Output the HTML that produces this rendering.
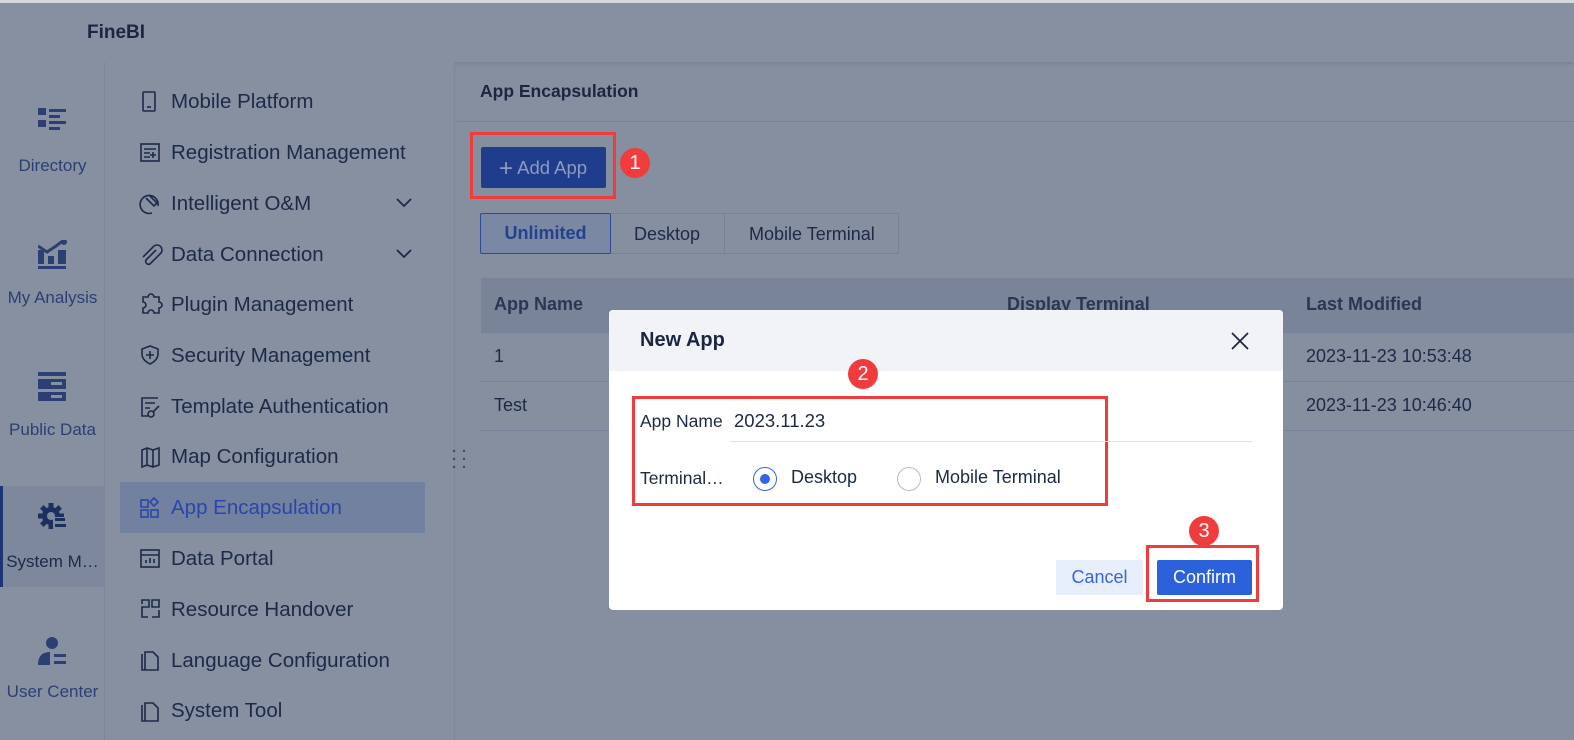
<!DOCTYPE html>
<html><head><meta charset="utf-8"><style>
*{margin:0;padding:0;box-sizing:border-box}
body{width:1574px;height:740px;overflow:hidden;background:#858fa0;font-family:"Liberation Sans",sans-serif;color:#1c2a48;position:relative}
.a{position:absolute}
.top{left:0;top:0;width:1574px;height:3px;background:#d4d6db}
.hdr{left:0;top:3px;width:1574px;height:59px;background:#8790a1;box-shadow:0 2px 4px rgba(0,0,0,.08)}
.nav{left:0;top:62px;width:105px;height:678px;background:#8690a1;border-right:1px solid #7e889a}
.side{left:105px;top:62px;width:350px;height:678px;background:#8690a1;border-right:1px solid #7e889a}
.ni{position:absolute;left:0;width:105px;text-align:center;font-size:17px;color:#2c3f73;white-space:nowrap;overflow:hidden}
.mi{position:absolute;left:141px;font-size:20.5px;color:#1c2a48;white-space:nowrap}
.mi span{position:absolute;left:30px;top:-1px}
.red{border:3px solid #f03c3c;position:absolute}
.badge{position:absolute;width:30px;height:30px;border-radius:50%;background:#f03c3c;color:#fff;font-size:20px;text-align:center;line-height:30px}
</style></head><body>
<div class="a top"></div>
<div class="a hdr"><div class="a" style="left:87px;top:19px;font-weight:bold;font-size:19px;color:#1b2643">FineBI</div></div>
<div class="a nav">
 <div class="a" style="left:0;top:424px;width:105px;height:101px;background:#7d889c;border-left:3px solid #1d3574"></div>
 <svg class="a" style="left:38px;top:46px" width="30" height="28"><g fill="#2c3f73"><rect x="0" y="0" width="8" height="7"/><rect x="0" y="12" width="8" height="7"/><rect x="11" y="1" width="17" height="3"/><rect x="11" y="7" width="11" height="3"/><rect x="11" y="13" width="17" height="3"/><rect x="11" y="19" width="11" height="3"/></g></svg>
 <div class="ni" style="top:94px">Directory</div>
 <svg class="a" style="left:38px;top:178px" width="30" height="30"><g fill="#2c3f73"><rect x="0" y="10" width="6" height="14"/><rect x="10" y="16" width="6" height="8"/><rect x="20" y="10" width="8" height="14"/><rect x="0" y="26" width="28" height="3"/><path d="M0 6L9 12 18 6 26 0" stroke="#2c3f73" stroke-width="3" fill="none"/><circle cx="26" cy="2" r="3"/></g></svg>
 <div class="ni" style="top:226px">My Analysis</div>
 <svg class="a" style="left:38px;top:310px" width="30" height="30"><g fill="#2c3f73"><rect x="0" y="0" width="28" height="4"/><rect x="0" y="7" width="28" height="10"/><rect x="0" y="20" width="28" height="9"/></g><rect x="13" y="10" width="11" height="3" fill="#8690a1"/><rect x="13" y="23" width="11" height="3" fill="#8690a1"/></svg>
 <div class="ni" style="top:358px">Public Data</div>
 <svg class="a" style="left:38px;top:441px" width="30" height="30">
  <g fill="#1d2f5e" transform="translate(13 13)">
   <circle r="9"/>
   <rect x="-2.5" y="-13" width="5" height="26"/><rect x="-2.5" y="-13" width="5" height="26" transform="rotate(45)"/><rect x="-2.5" y="-13" width="5" height="26" transform="rotate(90)"/><rect x="-2.5" y="-13" width="5" height="26" transform="rotate(135)"/>
  </g>
  <circle cx="13" cy="13" r="4" fill="#7d889c"/>
  <rect x="15" y="14" width="15" height="16" fill="#7d889c"/>
  <rect x="17" y="15" width="10" height="3" fill="#1d2f5e"/><rect x="17" y="21" width="11" height="3" fill="#1d2f5e"/>
 </svg>
 <div class="ni" style="top:490px;color:#1c2a48">System M…</div>
 <svg class="a" style="left:38px;top:575px" width="30" height="30"><circle cx="14" cy="6" r="6" fill="#2c3f73"/><path d="M0 28Q0 15 12 15L12 28Z" fill="#2c3f73"/><rect x="16" y="17" width="12" height="3" fill="#2c3f73"/><rect x="16" y="24" width="12" height="3" fill="#2c3f73"/></svg>
 <div class="ni" style="top:620px">User Center</div>
</div>
<div class="a side">
 <div class="a" style="left:15px;top:420px;width:305px;height:51px;background:#7381a0"></div>
</div>
<svg class="a" style="left:0;top:0" width="470" height="740" fill="none" stroke="#1c2a48" stroke-width="1.6">
 <rect x="143" y="92" width="12" height="19" rx="1"/><line x1="147" y1="107" x2="151" y2="107"/>
 <rect x="141" y="144" width="18" height="17"/><path d="M144 149h12M144 153h6M144 157h6M153 152v6M150 155h6"/>
 <path d="M158 206a9 9 0 1 0-6 7M146 198l8 8 3-3-8-8"/>
 <path d="M156 250l-10 10a3 3 0 0 0 4 4l11-11a5 5 0 0 0-7-7l-11 11"/>
 <path d="M143 297h5a3 3 0 0 1 6 0h5v5a3 3 0 0 1 0 6v5h-5a3 3 0 0 0-6 0h-5v-5a3 3 0 0 0 0-6z"/>
 <path d="M150 346l8 3v5c0 5-4 8-8 10-4-2-8-5-8-10v-5z M150 351v8M146 355h8"/>
 <path d="M158 398h-16v18h6M145 403h10M145 408h5"/><circle cx="151" cy="414" r="3"/><path d="M153 412l6-6"/>
 <path d="M142 450l5-2 6 2 6-2v17l-6 2-6-2-5 2z M147 448v17M153 450v17"/>
 <g stroke="#2b46a8"><rect x="141" y="500" width="7" height="7"/><rect x="141" y="510" width="7" height="7"/><rect x="151" y="510" width="7" height="7"/><path d="M154 498l4 4-4 4-4-4z"/></g>
 <rect x="141" y="550" width="18" height="17"/><path d="M141 555h18M146 563v-3M150 563v-5M154 563v-4"/>
 <path d="M142 604v-4h7v7h-7v10h6M152 600h7v7h-7zM159 610v7h-7"/>
 <path d="M142 654v16h3M145 652h8l5 5v13h-13z"/>
 <path d="M142 705v16h3M145 703h8l5 5v13h-13z"/>
 <path d="M397 199l7 7 7-7M397 250l7 7 7-7" stroke-width="1.8"/>
 <g fill="#3c4a66" stroke="none"><circle cx="454" cy="451" r="1.2"/><circle cx="454" cy="459" r="1.2"/><circle cx="454" cy="467" r="1.2"/><circle cx="464" cy="451" r="1.2"/><circle cx="464" cy="459" r="1.2"/><circle cx="464" cy="467" r="1.2"/></g>
</svg>
<div class="mi" style="top:91px"><span>Mobile Platform</span></div>
<div class="mi" style="top:142px"><span>Registration Management</span></div>
<div class="mi" style="top:193px"><span>Intelligent O&amp;M</span></div>
<div class="mi" style="top:244px"><span>Data Connection</span></div>
<div class="mi" style="top:294px"><span>Plugin Management</span></div>
<div class="mi" style="top:345px"><span>Security Management</span></div>
<div class="mi" style="top:396px"><span>Template Authentication</span></div>
<div class="mi" style="top:446px"><span>Map Configuration</span></div>
<div class="mi" style="top:497px;color:#2b46a8"><span>App Encapsulation</span></div>
<div class="mi" style="top:548px"><span>Data Portal</span></div>
<div class="mi" style="top:599px"><span>Resource Handover</span></div>
<div class="mi" style="top:650px"><span>Language Configuration</span></div>
<div class="mi" style="top:700px"><span>System Tool</span></div>

<!-- main -->
<div class="a" style="left:480px;top:81px;font-weight:bold;font-size:17.5px;color:#1b2643">App Encapsulation</div>
<div class="a" style="left:457px;top:121px;width:1117px;height:1px;background:#79849a"></div>
<div class="red" style="left:470px;top:132px;width:146px;height:67px"></div>
<div class="a" style="left:481px;top:147px;width:125px;height:41px;background:#1f3d8c;border-radius:2px;color:#8d9bc0;font-size:18.5px;line-height:41px;padding-left:18px;white-space:nowrap"><span style="font-size:24px;vertical-align:-2px">+</span> Add App</div>
<div class="badge" style="left:620px;top:148px">1</div>
<div class="a" style="left:481px;top:213px;width:418px;height:41px;border:1px solid #76829a;border-radius:2px"></div>
<div class="a" style="left:480px;top:213px;width:131px;height:41px;border:1px solid #2d4a96;background:#7a88a4;color:#24418e;font-weight:bold;font-size:18px;line-height:39px;text-align:center;border-radius:2px">Unlimited</div>
<div class="a" style="left:724px;top:213px;width:1px;height:41px;background:#76829a"></div>
<div class="a" style="left:634px;top:224px;font-size:18px">Desktop</div>
<div class="a" style="left:749px;top:224px;font-size:18px">Mobile Terminal</div>
<div class="a" style="left:481px;top:278px;width:1093px;height:54px;background:#7a8498"></div>
<div class="a" style="left:494px;top:294px;font-weight:bold;font-size:18px;color:#2a3654">App Name</div>
<div class="a" style="left:1007px;top:294px;font-weight:bold;font-size:18px;color:#2a3654">Display Terminal</div>
<div class="a" style="left:1306px;top:294px;font-weight:bold;font-size:18px;color:#2a3654">Last Modified</div>
<div class="a" style="left:481px;top:332px;width:1093px;height:1px;background:#76819a"></div>
<div class="a" style="left:481px;top:381px;width:1093px;height:1px;background:#76819a"></div>
<div class="a" style="left:481px;top:430px;width:1093px;height:1px;background:#76819a"></div>
<div class="a" style="left:494px;top:346px;font-size:18px">1</div>
<div class="a" style="left:494px;top:395px;font-size:18px">Test</div>
<div class="a" style="left:1306px;top:346px;font-size:18px">2023-11-23 10:53:48</div>
<div class="a" style="left:1306px;top:395px;font-size:18px">2023-11-23 10:46:40</div>

<!-- dialog -->
<div class="a" style="left:609px;top:310px;width:674px;height:300px;background:#fff;border-radius:4px;overflow:hidden">
 <div style="height:61px;background:#f2f3f7"></div>
</div>
<div class="a" style="left:640px;top:329px;font-weight:bold;font-size:20px;color:#1b2643">New App</div>
<svg class="a" style="left:1230px;top:331px" width="20" height="20"><path d="M2 2L18 18M18 2L2 18" stroke="#1b2643" stroke-width="1.8"/></svg>
<div class="badge" style="left:848px;top:359px">2</div>
<div class="red" style="left:632px;top:396px;width:476px;height:110px"></div>
<div class="a" style="left:640px;top:411px;font-size:17.5px">App Name</div>
<div class="a" style="left:734px;top:410px;font-size:18.5px">2023.11.23</div>
<div class="a" style="left:730px;top:441px;width:522px;height:1px;background:#dfe1e6"></div>
<div class="a" style="left:640px;top:468px;font-size:17.5px">Terminal…</div>
<div class="a" style="left:753px;top:467px;width:24px;height:24px;border:1.5px solid #3366e0;border-radius:50%"><div style="position:absolute;left:6px;top:6px;width:10px;height:10px;border-radius:50%;background:#3366e0"></div></div>
<div class="a" style="left:791px;top:467px;font-size:18px">Desktop</div>
<div class="a" style="left:897px;top:467px;width:24px;height:24px;border:1px solid #b8bcc6;border-radius:50%"></div>
<div class="a" style="left:935px;top:467px;font-size:18px">Mobile Terminal</div>
<div class="badge" style="left:1189px;top:516px">3</div>
<div class="a" style="left:1056px;top:560px;width:87px;height:35px;background:#e8effc;border-radius:2px;color:#3a64d8;font-size:18px;line-height:35px;text-align:center">Cancel</div>
<div class="red" style="left:1146px;top:545px;width:113px;height:57px"></div>
<div class="a" style="left:1157px;top:560px;width:95px;height:35px;background:#2b62dc;border-radius:2px;color:#fff;font-size:18px;line-height:35px;text-align:center">Confirm</div>
</body></html>
